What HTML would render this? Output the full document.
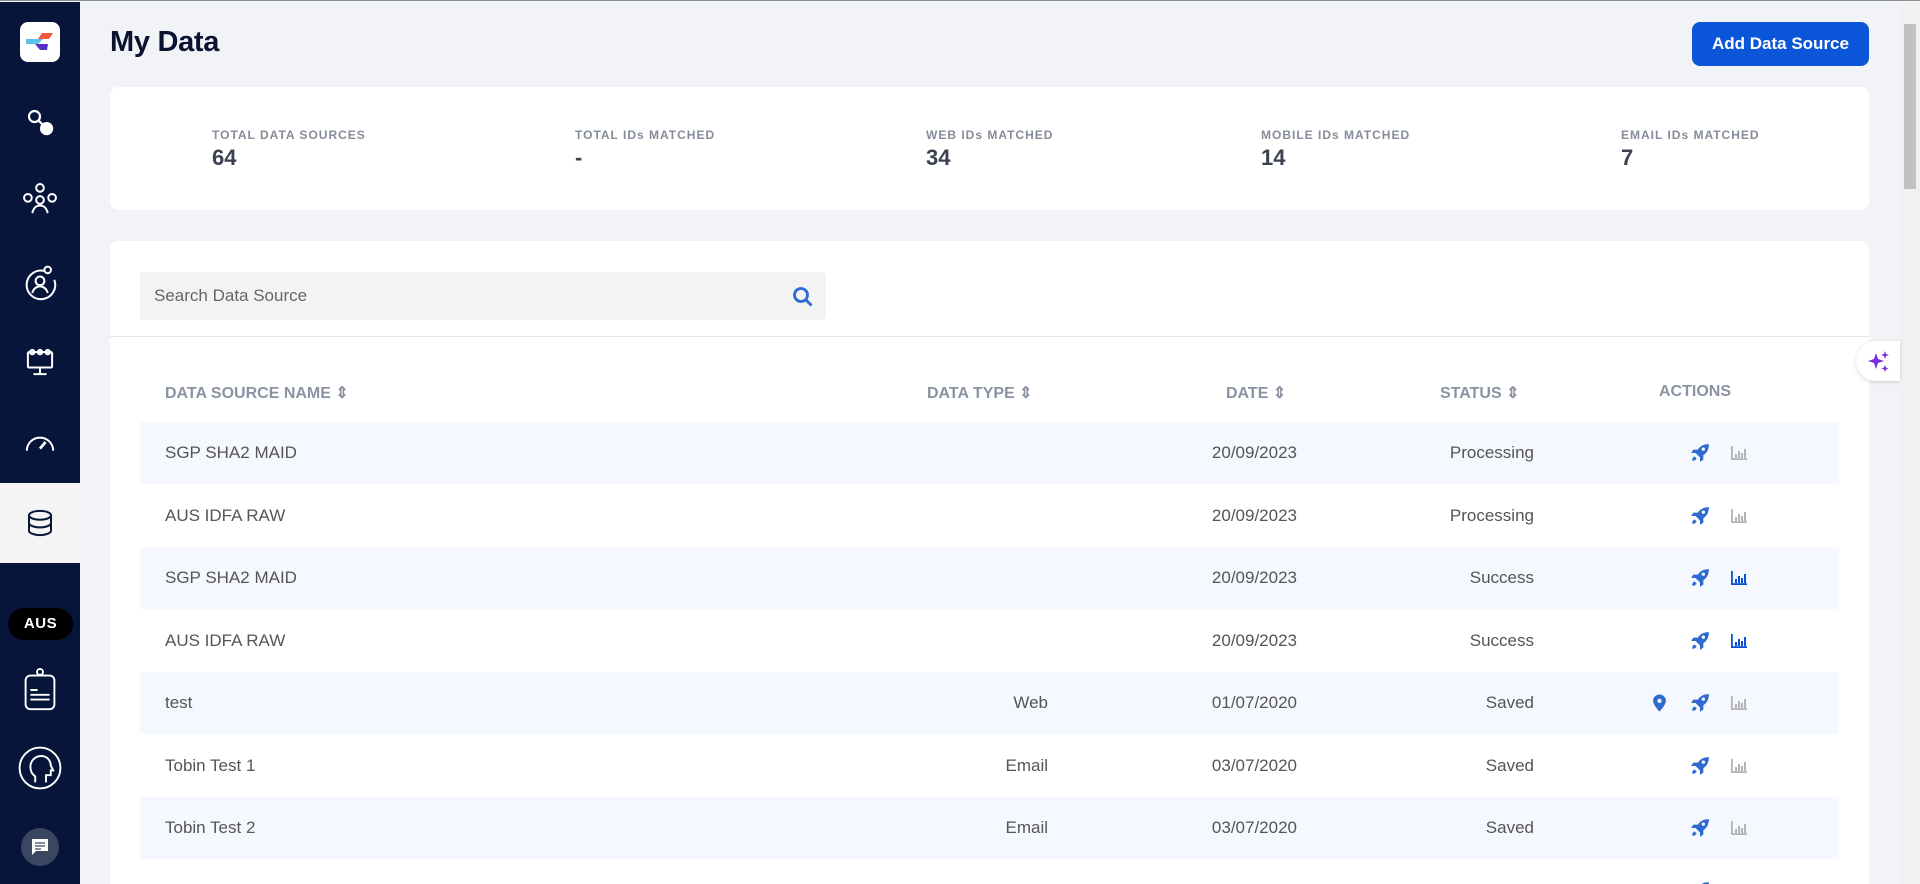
<!DOCTYPE html>
<html style="overflow:hidden;height:884px"><head><meta charset="utf-8"><style>
*{box-sizing:border-box;margin:0;padding:0}
body{width:1920px;height:884px;overflow:hidden;background:#f2f3f7;font-family:"Liberation Sans",sans-serif;position:relative;border-top:1px solid #8a9099}
.sb{position:absolute;left:0;top:1px;width:80px;height:883px;background:#07153a}
.ic{position:absolute;left:18px;width:44px;height:44px}
.logo{position:absolute;left:20px;top:20px;width:40px;height:40px;background:#fff;border-radius:8px}
.act{position:absolute;left:0;top:481px;width:80px;height:80px;background:#f5f5f5}
.aus{position:absolute;left:8px;top:606px;width:65px;height:32px;background:#000;border-radius:16px;color:#fff;font-weight:bold;font-size:15px;text-align:center;line-height:32px;letter-spacing:.5px}
h1{position:absolute;left:110px;top:25px;font-size:29px;font-weight:bold;color:#0a1230;letter-spacing:-.3px}
.btn{position:absolute;left:1692px;top:21px;width:177px;height:44px;background:#0b55d8;color:#fff;border-radius:8px;font-weight:bold;font-size:17px;text-align:center;line-height:44px}
.card{position:absolute;background:#fff;border-radius:8px}
.st{position:absolute;top:127px}
.st b{display:block;font-size:12px;color:#858c99;letter-spacing:1px}
.st i{display:block;font-style:normal;font-weight:bold;font-size:22px;color:#3a4150;margin-top:3px}
.search{position:absolute;left:140px;top:271px;width:686px;height:48px;background:#f3f3f3;border-radius:4px;color:#666;font-size:17px;line-height:48px;padding-left:14px}
.hr{position:absolute;left:110px;top:335px;width:1759px;height:1px;background:#e3e5ea}
.th{position:absolute;top:382px;font-size:16px;font-weight:bold;color:#8a93a3}
.row{position:absolute;left:140px;width:1699px;height:62px;font-size:17px;color:#555}
.row.s{background:#f5f8fe}
.row span{position:absolute;top:21px}
.r{text-align:right}
.sc{position:absolute;right:0;top:1px;width:20px;height:883px;background:#f1f1f1}
.th2{position:absolute;right:4px;top:22px;width:12px;height:165px;background:#c1c1c1}
</style></head><body>
<div class="sb">
 <div class="logo"><svg width="40" height="40" viewBox="0 0 40 40"><path d="M22 11h11l-4 6H18z" fill="#f05a3c"/><path d="M6 17h17l-5 5H6z" fill="#5bc2ea"/><path d="M15 22h13l-1 6H20z" fill="#5530c8"/></svg></div>
 <svg class="ic" style="top:98px" viewBox="0 0 40 40"><circle cx="15" cy="15" r="5" fill="none" stroke="#fff" stroke-width="2"/><line x1="18" y1="18" x2="22" y2="22" stroke="#fff" stroke-width="2"/><circle cx="26" cy="26" r="6" fill="#fff"/></svg>
 <svg class="ic" style="top:176px" viewBox="0 0 40 40" fill="none" stroke="#fff" stroke-width="1.8"><circle cx="20" cy="9" r="3.5"/><circle cx="9" cy="18" r="3.5"/><circle cx="31" cy="18" r="3.5"/><circle cx="20" cy="20" r="3.5"/><path d="M13 32c1-5 4-7 7-7s6 2 7 7"/></svg>
 <svg class="ic" style="top:258px" viewBox="0 0 40 40" fill="none" stroke="#fff" stroke-width="1.8"><circle cx="27" cy="9" r="3"/><path d="M24 10a13 13 0 1 0 9 8"/><circle cx="20" cy="19" r="4"/><path d="M13 30c1-4 4-6 7-6s6 2 7 6"/></svg>
 <svg class="ic" style="top:338px" viewBox="0 0 40 40" fill="none" stroke="#fff" stroke-width="1.8"><rect x="9" y="11" width="22" height="14" rx="1"/><circle cx="13" cy="11" r="2"/><circle cx="20" cy="11" r="2"/><circle cx="27" cy="11" r="2"/><path d="M20 25v6M14 31h12"/></svg>
 <svg class="ic" style="top:418px" viewBox="0 0 40 40" fill="none" stroke="#fff" stroke-width="1.8"><path d="M8 28a12 12 0 1 1 24 0"/><path d="M20 26l5-6" stroke-width="2.5"/></svg>
 <div class="act"><svg style="position:absolute;left:18px;top:18px" width="44" height="44" viewBox="0 0 40 40" fill="none" stroke="#0a1538" stroke-width="1.8"><ellipse cx="20" cy="13" rx="10" ry="4"/><path d="M10 13v14c0 2 4.5 4 10 4s10-2 10-4V13M10 20c0 2 4.5 4 10 4s10-2 10-4"/></svg></div>
 <div class="aus">AUS</div>
 <svg class="ic" style="top:664px;width:48px;height:48px;left:16px" viewBox="0 0 40 40" fill="none" stroke="#fff" stroke-width="1.6"><rect x="8" y="8" width="24" height="28" rx="4"/><circle cx="20" cy="5" r="2.5"/><path d="M14 8h12M12 20h6M12 24h16M12 28h16"/></svg>
 <svg class="ic" style="top:742px;width:48px;height:48px;left:16px" viewBox="0 0 40 40" fill="none" stroke="#fff" stroke-width="1.6"><circle cx="20" cy="20" r="17"/><path d="M16 32v-5c-3-2-4-5-4-8 0-5 4-9 9-9s8 4 8 8l2 4h-2v4h-4v6"/></svg>
 <div style="position:absolute;left:21px;top:826px;width:38px;height:38px;border-radius:50%;background:#3b4660"><svg style="position:absolute;left:9px;top:9px" width="20" height="20" viewBox="0 0 20 20"><path d="M2 2h16v12H6l-4 4z" fill="#fff"/><path d="M5 6h10M5 9h10M5 12h6" stroke="#3b4660" stroke-width="1.3"/></svg></div>
</div>
<h1>My Data</h1>
<div class="btn">Add Data Source</div>
<div class="card" style="left:110px;top:86px;width:1759px;height:123px"></div>
<div class="st" style="left:212px"><b>TOTAL DATA SOURCES</b><i>64</i></div>
<div class="st" style="left:575px"><b>TOTAL IDs MATCHED</b><i>-</i></div>
<div class="st" style="left:926px"><b>WEB IDs MATCHED</b><i>34</i></div>
<div class="st" style="left:1261px"><b>MOBILE IDs MATCHED</b><i>14</i></div>
<div class="st" style="left:1621px"><b>EMAIL IDs MATCHED</b><i>7</i></div>
<div class="card" style="left:110px;top:240px;width:1759px;height:644px;border-radius:8px 8px 0 0"></div>
<div class="search">Search Data Source<svg style="position:absolute;right:12px;top:14px" width="22" height="22" viewBox="0 0 22 22" fill="none" stroke="#2a6bd6" stroke-width="2.8"><circle cx="9" cy="9" r="6.5"/><path d="M14 14l5.5 5.5"/></svg></div>
<div class="hr"></div>
<div class="th" style="left:165px">DATA SOURCE NAME &#8661;</div>
<div class="th" style="left:927px">DATA TYPE &#8661;</div>
<div class="th" style="left:1226px">DATE &#8661;</div>
<div class="th" style="left:1440px">STATUS &#8661;</div>
<div class="th" style="left:1659px">ACTIONS</div>
<div id="rows"></div>
<div class="sc"><div class="th2"></div></div>
<div style="position:absolute;left:1856px;top:340px;width:44px;height:40px;background:#fff;border-radius:20px 0 0 20px;box-shadow:0 1px 4px rgba(0,0,0,.15)"><svg style="position:absolute;left:10px;top:8px" width="26" height="26" viewBox="0 0 26 26" fill="#7a2be0"><path d="M10 4l2 6 6 2-6 2-2 6-2-6-6-2 6-2z"/><path d="M19 2l1 3 3 1-3 1-1 3-1-3-3-1 3-1zM19 16l1 2.5 2.5 1-2.5 1-1 2.5-1-2.5-2.5-1 2.5-1z"/></svg></div>
<script>
var d=[["SGP SHA2 MAID","","20/09/2023","Processing",0,0],["AUS IDFA RAW","","20/09/2023","Processing",0,0],["SGP SHA2 MAID","","20/09/2023","Success",1,0],["AUS IDFA RAW","","20/09/2023","Success",1,0],["test","Web","01/07/2020","Saved",0,1],["Tobin Test 1","Email","03/07/2020","Saved",0,0],["Tobin Test 2","Email","03/07/2020","Saved",0,0],["Tobin Test 3","Email","03/07/2020","Saved",0,0]];
var h="";
var rocket='<svg style="position:absolute;left:1550px;top:21px" width="20" height="20" viewBox="0 0 18 18" fill="#2f6ad0"><path d="M17 1c-5 0-8 2-10 5H3L1 9h4l4 4v4l3-2v-4c3-2 5-5 5-10zM12 4a1.5 1.5 0 1 1 0 3 1.5 1.5 0 0 1 0-3z"/><path d="M4 12c-2 1-2 3-2 4 1 0 3 0 4-2z"/></svg>';
function chart(c){return '<svg style="position:absolute;left:1590px;top:22px" width="18" height="18" viewBox="0 0 18 18" fill="'+c+'"><rect x="1" y="2" width="1.8" height="14"/><rect x="1" y="14.2" width="16" height="1.8"/><rect x="5" y="10" width="2" height="4"/><rect x="8" y="7" width="2" height="7"/><rect x="11" y="9" width="2" height="5"/><rect x="14" y="5" width="2" height="9"/></svg>'}
var pin='<svg style="position:absolute;left:1511px;top:21px" width="17" height="20" viewBox="0 0 16 18" fill="#2f6ad0"><path d="M8 1a6 6 0 0 0-6 6c0 4 6 10 6 10s6-6 6-10a6 6 0 0 0-6-6zm0 4a2 2 0 1 1 0 4 2 2 0 0 1 0-4z"/></svg>';
d.forEach(function(r,i){h+='<div class="row'+(i%2==0?' s':'')+'" style="top:'+(421+i*62.5)+'px"><span style="left:25px">'+r[0]+'</span><span class="r" style="right:791px">'+r[1]+'</span><span class="r" style="right:542px">'+r[2]+'</span><span class="r" style="right:305px">'+r[3]+'</span>'+(r[5]?pin:'')+rocket+chart(r[4]?'#0b4fd6':'#b4b4b4')+'</div>'});
document.getElementById('rows').innerHTML=h;
</script>
</body></html>
